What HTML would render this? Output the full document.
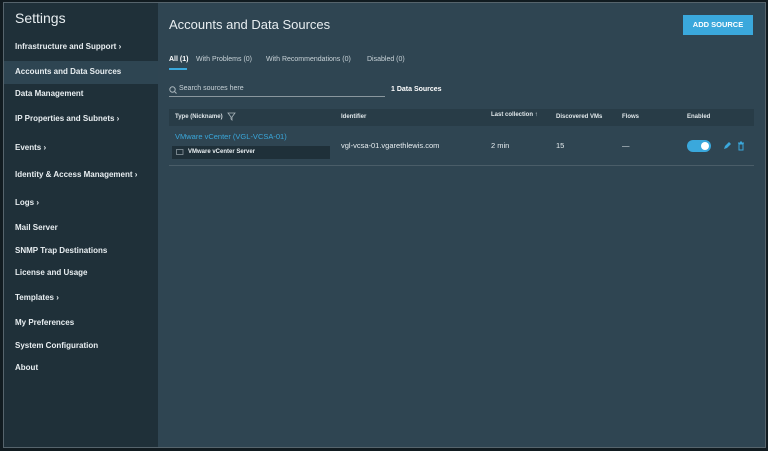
<!DOCTYPE html>
<html><head><meta charset="utf-8"><style>
*{margin:0;padding:0;box-sizing:border-box}
body{width:768px;height:451px;background:#111b20;font-family:"Liberation Sans",sans-serif;overflow:hidden;position:relative}
.frame{position:absolute;left:3px;top:2px;width:763px;height:446px;border:1px solid #56646c;background:#2f4552}
.side{position:absolute;left:0;top:0;width:154px;height:444px;background:#1f3039}
.t{position:absolute;color:#e8eef1;white-space:nowrap}
.s{font-size:8px;font-weight:bold;left:11px}
.hl{position:absolute;left:0;top:58px;width:154px;height:23px;background:#2e4552}
.m{font-size:7px;color:#c9d3d8}
.th{font-size:6px;font-weight:bold;color:#e0e7ea}
</style></head><body>
<div class="frame">
<div class="side">
<div class="hl"></div>
<div class="t" style="left:11px;top:7px;font-size:14px">Settings</div>
<div class="t s" style="top:39px">Infrastructure and Support ›</div>
<div class="t s" style="top:64px">Accounts and Data Sources</div>
<div class="t s" style="top:86px">Data Management</div>
<div class="t s" style="top:111px">IP Properties and Subnets ›</div>
<div class="t s" style="top:140px">Events ›</div>
<div class="t s" style="top:167px">Identity &amp; Access Management ›</div>
<div class="t s" style="top:195px">Logs ›</div>
<div class="t s" style="top:220px">Mail Server</div>
<div class="t s" style="top:243px">SNMP Trap Destinations</div>
<div class="t s" style="top:265px">License and Usage</div>
<div class="t s" style="top:290px">Templates ›</div>
<div class="t s" style="top:315px">My Preferences</div>
<div class="t s" style="top:338px">System Configuration</div>
<div class="t s" style="top:360px">About</div>
</div>
<div class="t" style="left:165px;top:14px;font-size:13px">Accounts and Data Sources</div>
<div style="position:absolute;left:679px;top:12px;width:70px;height:20px;background:#3aa8dc;color:#fff;font-size:7.5px;font-weight:bold;text-align:center;line-height:20px">ADD SOURCE</div>
<div class="t m" style="left:165px;top:53px;color:#fff;font-weight:bold">All (1)</div>
<div style="position:absolute;left:165px;top:65px;width:18px;height:2px;background:#3aa8dc"></div>
<div class="t m" style="left:192px;top:53px">With Problems (0)</div>
<div class="t m" style="left:262px;top:53px">With Recommendations (0)</div>
<div class="t m" style="left:363px;top:53px">Disabled (0)</div>
<svg style="position:absolute;left:165px;top:83px" width="8" height="8"><circle cx="3.5" cy="3.5" r="2.7" fill="none" stroke="#aab6bc"/><line x1="5.5" y1="5.5" x2="7.5" y2="7.5" stroke="#aab6bc"/></svg>
<div class="t m" style="left:175px;top:82px">Search sources here</div>
<div style="position:absolute;left:165px;top:93px;width:216px;height:1px;background:#8a979e"></div>
<div class="t m" style="left:387px;top:83px;color:#fff;font-weight:bold">1 Data Sources</div>
<div style="position:absolute;left:165px;top:106px;width:585px;height:17px;background:#283c47"></div>
<div class="t th" style="left:171px;top:111px">Type (Nickname)</div>
<svg style="position:absolute;left:223px;top:109px" width="9" height="9"><path d="M1 1h7L5 5v3L4 7V5z" fill="none" stroke="#aab6bc" stroke-width=".8"/></svg>
<div class="t th" style="left:337px;top:111px">Identifier</div>
<div class="t th" style="left:487px;top:109px">Last collection ↑</div>
<div class="t th" style="left:552px;top:111px">Discovered VMs</div>
<div class="t th" style="left:618px;top:111px">Flows</div>
<div class="t th" style="left:683px;top:111px">Enabled</div>
<div class="t" style="left:171px;top:129px;font-size:7.5px;color:#3aa8dc">VMware vCenter (VGL-VCSA-01)</div>
<div style="position:absolute;left:168px;top:143px;width:158px;height:13px;background:#1f3039"></div>
<svg style="position:absolute;left:172px;top:146px" width="8" height="7"><rect x=".5" y=".5" width="6.5" height="5" fill="none" stroke="#8a979e" stroke-width=".8"/></svg>
<div class="t" style="left:184px;top:146px;font-size:6px;font-weight:bold">VMware vCenter Server</div>
<div class="t" style="left:337px;top:138px;font-size:7.5px">vgl-vcsa-01.vgarethlewis.com</div>
<div class="t" style="left:487px;top:138px;font-size:7.5px">2 min</div>
<div class="t" style="left:552px;top:138px;font-size:7.5px">15</div>
<div class="t" style="left:618px;top:138px;font-size:7.5px">—</div>
<div style="position:absolute;left:683px;top:137px;width:24px;height:12px;border-radius:6px;background:#3aa8dc"></div>
<div style="position:absolute;left:697px;top:139px;width:8px;height:8px;border-radius:50%;background:#fff"></div>
<svg style="position:absolute;left:719px;top:138px" width="8" height="9"><path d="M1 8l1-3 4-4 2 2-4 4z" fill="#3aa8dc"/></svg>
<svg style="position:absolute;left:733px;top:138px" width="8" height="10"><path d="M1 2h6M3 1h2M2 3h4v6H2z" fill="none" stroke="#3aa8dc" stroke-width="1"/></svg>
<div style="position:absolute;left:165px;top:162px;width:585px;height:1px;background:#4a5d68"></div>
</div>
</body></html>
